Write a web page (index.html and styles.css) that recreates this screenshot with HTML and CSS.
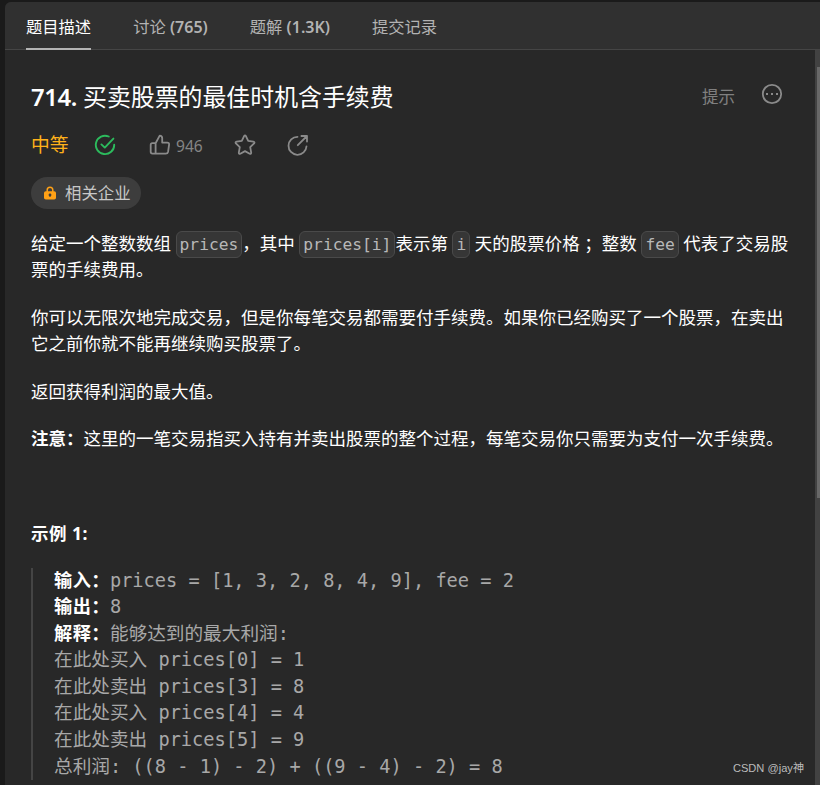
FILE: index.html
```html
<!DOCTYPE html>
<html lang="zh-CN">
<head>
<meta charset="utf-8">
<title>714. 买卖股票的最佳时机含手续费</title>
<link rel="stylesheet" href="styles.css">
</head>
<body>
<main class="panel">
  <nav class="tabs">
    <a class="tab active">题目描述</a>
    <a class="tab">讨论 <b>(765)</b></a>
    <a class="tab">题解 <b>(1.3K)</b></a>
    <a class="tab">提交记录</a>
  </nav>
  <div class="body">
    <article class="content">
      <header class="heading">
        <h1><b>714.</b> 买卖股票的最佳时机含手续费</h1>
        <span class="hint">提示</span>
        <svg class="more" viewBox="0 0 22 22"><circle cx="11" cy="11" r="9.2" fill="none" stroke="currentColor" stroke-width="1.8"/><g fill="currentColor"><rect x="5" y="10" width="2" height="2"/><rect x="10" y="10" width="2" height="2"/><rect x="15" y="10" width="2" height="2"/></g></svg>
      </header>
      <div class="meta">
        <span class="level">中等</span>
        <svg class="icon done" viewBox="0 0 22 22"><path d="M14.7 2.5A9.2 9.2 0 1 0 20.2 10.8"/><path d="M7.4 10.4l3.4 3.2 8.6-9"/></svg>
        <svg class="icon like" viewBox="0 0 22 22"><path d="M6.600 9.200H3.300q-1.600 0-1.600 1.600v7q0 1.800 1.800 1.800h13.200q2 0 2.400-1.900l1-7.100q.2-2-1.800-2h-5.100V4.300q0-2.500-2.500-2.700L6.600 9.200v10.400"/></svg>
        <span class="count">946</span>
        <svg class="icon star" viewBox="0 0 22 22"><path d="M10.100 2.100q.9-1.300 1.800 0l2.300 4.800 5.200.8q1.700.4.7 1.700l-3.900 3.800 1 5.500q0 1.500-1.500 1L11 17.100l-4.700 2.600q-1.500.5-1.500-1l1-5.500-3.900-3.800q-1-1.300.7-1.700l5.200-.8z"/></svg>
        <svg class="icon share" viewBox="0 0 22 22"><path d="M10.500 2.800A9 9 0 1 0 19.500 12.300"/><path d="M10.800 11.200L20 2M14.400 2H20v5.600"/></svg>
      </div>
      <div class="company">
        <svg class="lock" viewBox="0 0 12 14"><path d="M3.200 6V4a2.800 2.800 0 0 1 5.600 0v2" fill="none" stroke="currentColor" stroke-width="1.500"/><rect x="0" y="5.200" width="12" height="8.400" rx="1.800" fill="currentColor"/><circle cx="6" cy="8.900" r="1.400" fill="#3d3d3d"/><path d="M6 9v2" stroke="#3d3d3d"/></svg>
        <span>相关企业</span>
      </div>
      <div class="text">
        <p>给定一个整数数组 <code>prices</code>，其中 <code>prices[i]</code>表示第 <code>i</code> 天的股票价格 ；整数 <code>fee</code> 代表了交易股<br>票的手续费用。</p>
        <p>你可以无限次地完成交易，但是你每笔交易都需要付手续费。如果你已经购买了一个股票，在卖出<br>它之前你就不能再继续购买股票了。</p>
        <p>返回获得利润的最大值。</p>
        <p><strong>注意：</strong>这里的一笔交易指买入持有并卖出股票的整个过程，每笔交易你只需要为支付一次手续费。</p>
        <p>&nbsp;</p>
        <p><strong class="example">示例 1:</strong></p>
        <pre><strong>输入：</strong>prices = [1, 3, 2, 8, 4, 9], fee = 2
<strong>输出：</strong>8
<strong>解释：</strong>能够达到的最大利润:
在此处买入 prices[0] = 1
在此处卖出 prices[3] = 8
在此处买入 prices[4] = 4
在此处卖出 prices[5] = 9
总利润: ((8 - 1) - 2) + ((9 - 4) - 2) = 8</pre>
      </div>
    </article>
    <div class="scrollbar"><div class="thumb"></div></div>
  </div>
</main>
<div class="watermark">CSDN @jay神</div>
</body>
</html>
```
FILE: styles.css
```css
* { box-sizing: border-box; }
body {
  margin: 0;
  height: 785px;
  overflow: hidden;
  padding: 2px 0 0 5px;
  background: #1a1a1a;
  color: #fff;
  font-family: "Noto Sans", "Noto Sans CJK SC", sans-serif;
}
.panel {
  height: 783px;
  display: flex;
  flex-direction: column;
  background: #282828;
  border-top-left-radius: 6px;
  overflow: hidden;
}
.tabs {
  flex: none;
  display: flex;
  gap: 42px;
  height: 48px;
  padding-left: 21px;
  background: #303030;
  border-bottom: 1px solid #454545;
}
.tab {
  height: 48px;
  font-size: 16.3px;
  line-height: 50px;
  color: #b3b3b3;
  white-space: nowrap;
}
.tab b { font-weight: 600; font-size: 16px; }
.tab.active { color: #fff; border-bottom: 2px solid #b3b3b3; }
.body { flex: 1; display: flex; min-height: 0; }
.content { flex: 1; min-width: 0; padding: 27px 0 0 26px; }
.heading { display: flex; height: 40px; }
h1 {
  margin: 0;
  width: 671px;
  font-size: 23.9px;
  line-height: 39px;
  font-weight: 400;
  white-space: nowrap;
}
h1 b { font-weight: 600; letter-spacing: -0.45px; }
.hint { font-size: 16.5px; line-height: 39px; color: #808080; width: 59px; }
.more { width: 22px; height: 22px; margin-top: 6px; color: #8a8a8a; }
.meta { display: flex; align-items: center; height: 30px; margin-top: 13px; }
.level { width: 63px; font-size: 18.75px; line-height: 30px; color: #ffb21a; }
.icon {
  width: 22px;
  height: 22px;
  fill: none;
  stroke: #8a8a8a;
  stroke-width: 1.8;
  stroke-linecap: round;
  stroke-linejoin: round;
}
.done { stroke: #2cbb5d; stroke-width: 1.9; }
.like { margin-left: 33px; }
.count { margin: 2px 0 0 5px; width: 58px; font-size: 15.6px; color: #858585; }
.star { margin-right: 31px; }
.company {
  display: flex;
  align-items: center;
  width: 110px;
  height: 32px;
  margin-top: 17px;
  padding-left: 13px;
  border-radius: 16px;
  background: #3d3d3d;
  color: #c8c8c8;
  font-size: 16.4px;
  line-height: 32px;
}
.lock { width: 12px; height: 14px; margin-right: 9px; color: #ffa116; }
.text { margin-top: 21px; font-size: 17.5px; line-height: 26.25px; }
p { margin: 0 0 21.25px; height: 26.25px; white-space: nowrap; }
p:nth-child(-n+2) { height: 52.5px; }
code {
  display: inline-block;
  height: 27px;
  padding: 0 3px;
  border: 1px solid #4a4a4a;
  border-radius: 6px;
  background: #363636;
  color: #b8b8b8;
  font: 16.25px/25px "DejaVu Sans Mono", monospace;
  vertical-align: middle;
  margin: -4px 0 -2px;
}
.example { letter-spacing: 0.5px; }
pre {
  margin: 0;
  height: 212px;
  padding-left: 21px;
  border-left: 2px solid #454545;
  color: #a8a8a8;
  font: 18.65px/26.6px "DejaVu Sans Mono", "Noto Sans CJK SC", monospace;
}
pre strong { color: #fff; font-size: 18.2px; letter-spacing: 0.45px; }
.scrollbar { width: 5px; padding: 17px 0 0 2px; background: #424242; }
.thumb { height: 431px; background: #686868; }
.watermark {
  position: absolute;
  right: 16px;
  bottom: 8px;
  font: 11.1px/18px "Liberation Sans", "Noto Sans CJK SC", sans-serif;
  color: #bbb;
}
```
